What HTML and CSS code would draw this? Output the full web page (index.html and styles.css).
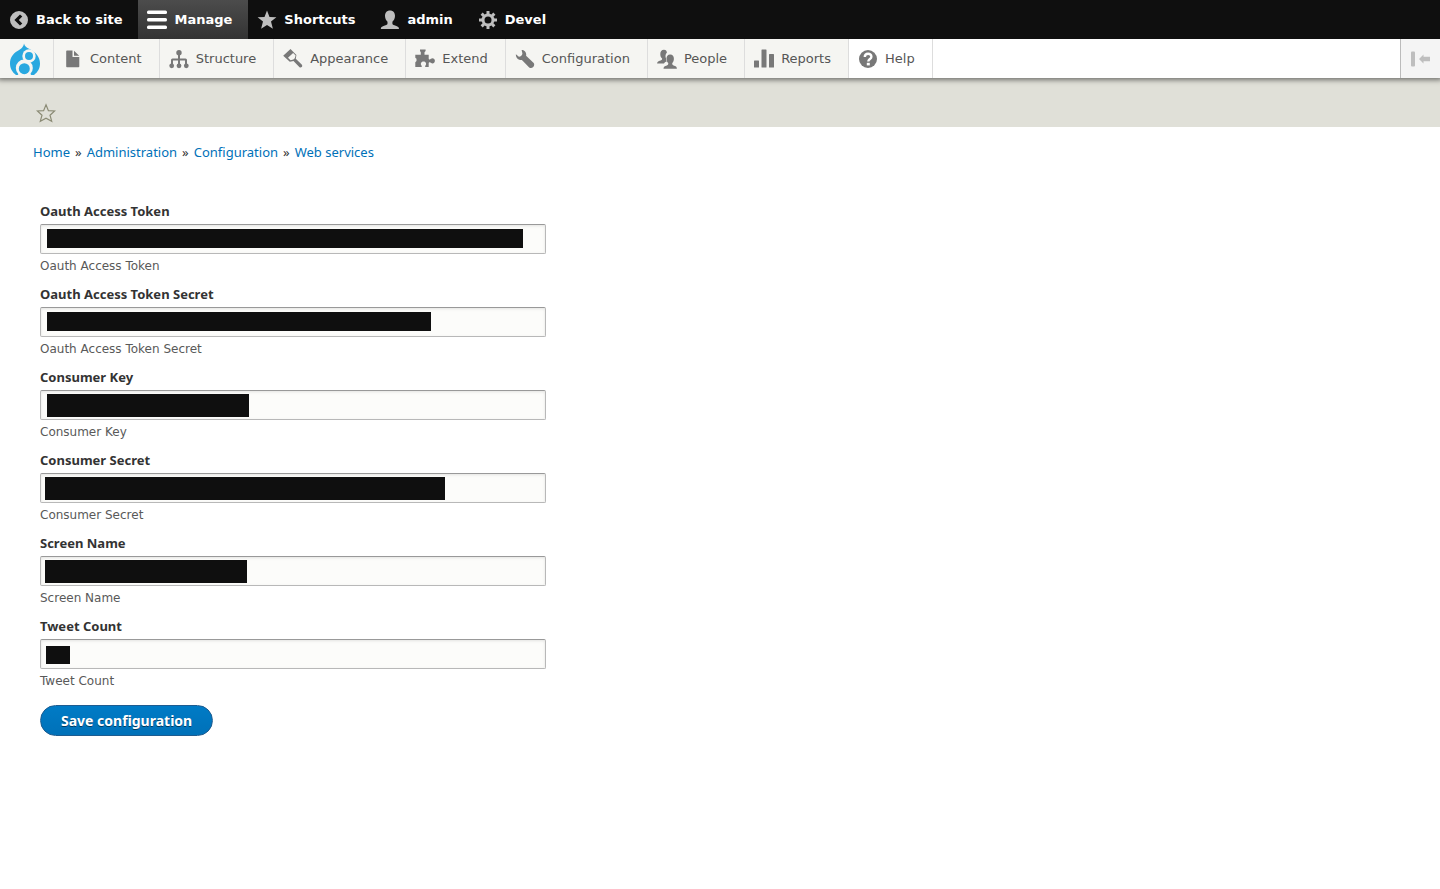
FILE: index.html
```html
<!DOCTYPE html>
<html lang="en">
<head>
    <meta charset="UTF-8">
    <meta name="viewport" content="width=device-width, initial-scale=1.0">
    <title>Web services</title>
    <link rel="stylesheet" href="styles.css">
</head>
<body>
    <header class="toolbar">
        <nav class="toolbar-bar" aria-label="Toolbar items">
            <a class="bar-item" href="#">
                <svg class="icon" viewBox="0 0 20 20" aria-hidden="true"><path fill-rule="evenodd" d="M10 1a9 9 0 1 0 0 18 9 9 0 0 0 0-18zM11 4.400l2.300 2.100L9.800 10l3.500 3.500-2.300 2.100L5.400 10z"/></svg>
                Back to site
            </a>
            <a class="bar-item is-active" href="#">
                <svg class="icon" viewBox="0 0 20 20" aria-hidden="true"><rect y="0.500" width="20" height="3.500" rx="1.500"/><rect y="8" width="20" height="3.500" rx="1.500"/><rect y="15.500" width="20" height="3.500" rx="1.500"/></svg>
                Manage
            </a>
            <a class="bar-item" href="#">
                <svg class="icon" viewBox="0 0 20 20" aria-hidden="true"><path d="M10 .5l2.500 6.500 6.900.3-5.400 4.300 1.900 7.200L10 14.900l-5.900 3.900L6 11.600.6 7.300 7.500 7z"/></svg>
                Shortcuts
            </a>
            <a class="bar-item" href="#">
                <svg class="icon" viewBox="0 0 20 20" aria-hidden="true"><path d="M10 .5c3.200 0 5 2.200 5 5.300 0 2.500-1 4.600-2.600 6v1.700c0 1 .7 1.400 2 1.800 3 .9 4.600 1.600 4.600 3.700H.8c0-2.100 1.700-2.800 4.700-3.700 1.300-.4 2-.8 2-1.800v-1.700C6 10.400 5 8.300 5 5.800 5 2.700 6.800.5 10 .5z"/></svg>
                admin
            </a>
            <a class="bar-item" href="#">
                <svg class="icon" viewBox="0 0 20 20" aria-hidden="true"><g id="teeth"><path d="M8.500 1h3v4h-3zM8.500 15h3v4h-3zM1 8.500h4v3H1zM15 8.500h4v3h-4z"/></g><use href="#teeth" transform="rotate(45 10 10)"/><path fill-rule="evenodd" d="M10 3.500a6.500 6.500 0 1 0 0 13 6.500 6.500 0 0 0 0-13zm0 3a3.500 3.500 0 1 1 0 7 3.500 3.500 0 0 1 0-7z"/></svg>
                Devel
            </a>
        </nav>
        <nav class="toolbar-tray" aria-label="Administration menu">
            <a class="tray-home" href="#" aria-label="Drupal">
                <svg class="logo" viewBox="0 0 32 34" aria-hidden="true">
                    <path class="drop" d="M15 1.500c.6 2.600 2.200 3.800 5 5.200C26.500 10 31 14.500 31 21.500c0 5-2.200 8.500-6 11.500H7C3.200 30 1 26.500 1 21.500 1 16 3.800 11.800 8.500 9c3.500-2 5.800-3.500 6.500-7.500z"/>
                    <circle class="ring" cx="15.300" cy="26" r="8.500"/>
                    <path class="ring" d="M8 34l3-4h9l3 4z"/>
                    <circle class="ring" cx="20" cy="14" r="6.700"/>
                    <circle class="drop" cx="20" cy="14" r="4"/>
                    <circle class="drop" cx="15.300" cy="26.700" r="5.500"/>
                </svg>
            </a>
            <a class="tray-item" href="#">
                <svg class="icon" viewBox="0 0 20 20" aria-hidden="true"><path d="M4 1.500h5.500V8h6.800v9.500a.8.8 0 0 1-.8.8H4a.8.8 0 0 1-.8-.8V2.300a.8.8 0 0 1 .8-.8zM11 1.700l5.200 5H11z"/></svg>
                Content
            </a>
            <a class="tray-item" href="#">
                <svg class="icon" viewBox="0 0 20 20" aria-hidden="true"><path d="M9 4h2v5.500h5.500q1.500 0 1.500 1.500v5h-2v-4.500h-5V16H9v-4.500H4V16H2v-5q0-1.500 1.500-1.500H9z"/><circle cx="10" cy="3.700" r="2.700"/><circle cx="2.700" cy="16.800" r="2.400"/><circle cx="10" cy="16.800" r="2.400"/><circle cx="17.300" cy="16.800" r="2.400"/></svg>
                Structure
            </a>
            <a class="tray-item" href="#">
                <svg class="icon" viewBox="0 0 20 20" aria-hidden="true"><path fill-rule="evenodd" d="M7.500 0l5.900 6-.6 3.700 5.900 5.900c1.600 1.700-.7 4-2.400 2.400l-5.800-6-3.700.7L.2 6.700zM5 8.800l2.600 2.500 2.800-.7 1.400-1.300.8-2.800-2.500-2.600z"/></svg>
                Appearance
            </a>
            <a class="tray-item" href="#">
                <svg class="icon" viewBox="0 0 20 20" aria-hidden="true"><path d="M5 .6h5.600v1.500L9.500 3.200v2.500h4.200v3.500c0 1.500 1.300 1.500 2.200.6 1.600-1.400 4-.4 4 2s-2.400 3.500-4 2c-.9-.9-2.200-.9-2.200.7V18h-3.500v-1.200c1.700-1.600.9-4.400-1.700-4.400s-3.400 2.800-1.800 4.400V18H.3v-4.800l1.200-1.300V9.700L.3 8.800V5.700h5.500V3.200L5 2.100z"/></svg>
                Extend
            </a>
            <a class="tray-item" href="#">
                <svg class="icon" viewBox="0 0 20 20" aria-hidden="true"><path d="M6.600.9c3 0 5.200 2.700 4.500 5.800l7.600 7.400c1.800 2.700-1.600 6.300-4.500 4.400L6.900 10.900C3.500 11.400.6 8.700.9 5.200l3 2.500c1.800 0 3.400-1.500 3.500-3.300z"/></svg>
                Configuration
            </a>
            <a class="tray-item" href="#">
                <svg class="icon" viewBox="0 0 20 20" aria-hidden="true"><path d="M7 .7c1.900 0 2.800 1.200 2.900 3-1.500 1.200-1.800 3.700-.8 6.100.5 1.300 1.200 1.700 1.100 2.500-1.500.5-2.600 1-3.200 2.300H.1c0-1.700 1-2.400 3.500-3.200 1.400-.4 1.600-1 1.500-1.900C3.600 8.300 3.300 6.600 3.300 5 3.300 2.400 4.500.7 7 .7z"/><path class="person-front" d="M13.200 5.500c2.500 0 3.700 1.700 3.700 4.200 0 1.800-.6 3.200-1.600 4.400-.2 1.200.1 1.900 1.300 2.300 2.100.6 3.300 1.200 3.300 3.400H6.500c0-2.200 1.200-2.800 3.400-3.400 1.200-.4 1.500-1.100 1.300-2.300-1.100-1.200-1.700-2.600-1.700-4.400 0-2.500 1.200-4.200 3.700-4.200z"/></svg>
                People
            </a>
            <a class="tray-item" href="#">
                <svg class="icon" viewBox="0 0 20 20" aria-hidden="true"><rect x="0" y="11.500" width="5" height="7" rx="0.500"/><rect x="7.500" y="0.500" width="5" height="18" rx="0.500"/><rect x="15" y="5" width="5" height="13.500" rx="0.500"/></svg>
                Reports
            </a>
            <a class="tray-item is-current" href="#">
                <svg class="icon" viewBox="0 0 20 20" aria-hidden="true"><circle cx="10" cy="10" r="9"/><path class="mark" d="M6.800 8c0-4.200 6.600-4.200 6.600-.3 0 2.300-3.100 2.400-3.100 4.900"/><rect class="mark-dot" x="8.800" y="13.800" width="3" height="2.600"/></svg>
                Help
            </a>
            <button class="tray-toggle" type="button" aria-label="Vertical orientation">
                <svg class="icon" viewBox="0 0 20 20" aria-hidden="true"><rect x="1" y="2.500" width="4" height="15" rx="1"/><path d="M9 10l4.500-4.500v2.300H20v4.400h-6.500v2.300z"/></svg>
            </button>
        </nav>
    </header>

    <div class="page-header">
        <a class="shortcut-star" href="#" aria-label="Add to shortcuts">
            <svg class="icon" viewBox="0 0 20 20" aria-hidden="true"><path d="M10 1.800l2.400 5.900 6.200.3-4.600 4.200 1.700 6-5.700-3.100-5.700 3.100 1.700-6L1.400 8l6.200-.3z"/></svg>
        </a>
    </div>

    <main class="page-content">
        <nav class="breadcrumb" aria-label="Breadcrumb">
            <a href="#">Home</a>
            <span>»</span>
            <a href="#">Administration</a>
            <span>»</span>
            <a href="#">Configuration</a>
            <span>»</span>
            <a href="#">Web services</a>
        </nav>

        <form class="settings-form">
            <div class="form-item">
                <label for="access-token">Oauth Access Token</label>
                <div class="field">
                    <input type="text" id="access-token" aria-describedby="access-token-help">
                    <span class="redacted" style="width: 476px"></span>
                </div>
                <div class="description" id="access-token-help">Oauth Access Token</div>
            </div>
            <div class="form-item">
                <label for="access-secret">Oauth Access Token Secret</label>
                <div class="field">
                    <input type="text" id="access-secret" aria-describedby="access-secret-help">
                    <span class="redacted" style="width: 384px"></span>
                </div>
                <div class="description" id="access-secret-help">Oauth Access Token Secret</div>
            </div>
            <div class="form-item">
                <label for="consumer-key">Consumer Key</label>
                <div class="field">
                    <input type="text" id="consumer-key" aria-describedby="consumer-key-help">
                    <span class="redacted tall" style="width: 202px"></span>
                </div>
                <div class="description" id="consumer-key-help">Consumer Key</div>
            </div>
            <div class="form-item">
                <label for="consumer-secret">Consumer Secret</label>
                <div class="field">
                    <input type="text" id="consumer-secret" aria-describedby="consumer-secret-help">
                    <span class="redacted tall inset" style="width: 400px"></span>
                </div>
                <div class="description" id="consumer-secret-help">Consumer Secret</div>
            </div>
            <div class="form-item">
                <label for="screen-name">Screen Name</label>
                <div class="field">
                    <input type="text" id="screen-name" aria-describedby="screen-name-help">
                    <span class="redacted tall inset" style="width: 202px"></span>
                </div>
                <div class="description" id="screen-name-help">Screen Name</div>
            </div>
            <div class="form-item">
                <label for="tweet-count">Tweet Count</label>
                <div class="field">
                    <input type="text" id="tweet-count" aria-describedby="tweet-count-help">
                    <span class="redacted short" style="width: 24px"></span>
                </div>
                <div class="description" id="tweet-count-help">Tweet Count</div>
            </div>
            <div class="form-actions">
                <button class="save-button" type="submit">Save configuration</button>
            </div>
        </form>
    </main>
</body>
</html>
```
FILE: styles.css
```css
body {
    margin: 0;
    background: #fff;
    color: #333;
    font-family: "Noto Sans", "Open Sans", sans-serif;
    font-size: 13px;
}
a {
    color: #0071b8;
    text-decoration: none;
}
.icon {
    width: 20px;
    height: 20px;
    flex: none;
}
.toolbar {
    position: relative;
    font-family: "DejaVu Sans", Verdana, sans-serif;
    font-size: 13px;
    line-height: 39px;
    box-shadow: 0 0 5px 2px rgba(0, 0, 0, 0.5);
}
.toolbar-bar {
    display: flex;
    background: #0f0f0f;
}
.bar-item {
    display: flex;
    align-items: center;
    gap: 7px;
    padding: 0 16px 0 9px;
    color: #fff;
    fill: #bebebe;
    font-weight: bold;
}
.bar-item.is-active {
    fill: #fff;
    background: linear-gradient(#4c4c4c, #333);
}
.toolbar-tray {
    display: flex;
    height: 39px;
    background: #fff;
}
.tray-home,
.tray-item {
    display: flex;
    align-items: center;
    border-right: 1px solid #ddd;
    background: #f5f5f2;
    color: #565656;
}
.tray-home {
    padding: 0 12px 0 9px;
}
.logo {
    width: 32px;
    height: 34px;
}
.drop {
    fill: #29a8e0;
}
.ring {
    fill: #f5f5f2;
}
.tray-item {
    gap: 7px;
    padding: 0 17px 0 9px;
    fill: #787878;
}
.tray-item.is-current {
    background: #fff;
}
.person-front {
    stroke: #f5f5f2;
    stroke-width: 1;
    paint-order: stroke;
}
.mark {
    fill: none;
    stroke: #fff;
    stroke-width: 2.4;
}
.mark-dot {
    fill: #fff;
}
.tray-toggle {
    display: flex;
    align-items: center;
    margin-left: auto;
    padding: 0 10px 0 9px;
    border: 0;
    border-left: 1px solid #bbb;
    background: #f4f4f4;
    fill: #bebebe;
    cursor: pointer;
}
.page-header {
    padding: 25px 36px 4px;
    background: #e0e0d8;
}
.shortcut-star {
    display: block;
    width: 20px;
    height: 20px;
    fill: none;
    stroke: #8b8b75;
    stroke-width: 1.2;
}
.page-content {
    padding: 15px 33px;
}
.breadcrumb {
    display: flex;
    flex-wrap: wrap;
    gap: 5px;
    line-height: 20px;
}
.settings-form {
    max-width: 506px;
    margin: 41px 7px;
}
.form-item {
    margin-bottom: 12px;
}
.form-item label {
    display: block;
    padding-bottom: 5px;
    font-weight: bold;
    line-height: 16px;
}
.field {
    position: relative;
}
.field input {
    display: block;
    box-sizing: border-box;
    width: 100%;
    height: 30px;
    padding: 4px 8px;
    border: 1px solid #b8b8b8;
    border-top-color: #999;
    border-radius: 2px;
    background: #fcfcfa;
    box-shadow: inset 0 1px 3px rgba(0, 0, 0, 0.1);
    font: inherit;
}
/* solid bar over the stored value */
.redacted {
    position: absolute;
    top: 5px;
    left: 7px;
    height: 19px;
    background: #0f0f0f;
}
.redacted.tall {
    top: 4px;
    height: 23px;
}
.redacted.inset {
    left: 5px;
}
.redacted.short {
    top: 7px;
    left: 6px;
    height: 18px;
}
.description {
    padding-top: 4px;
    color: #595959;
    font-family: "DejaVu Sans", sans-serif;
    font-size: 12px;
    line-height: 16px;
}
.form-actions {
    padding-top: 4px;
}
.save-button {
    padding: 4px 20px;
    border: 1px solid #1e5c90;
    border-radius: 20px;
    background: linear-gradient(#007bc6, #0071b8);
    color: #fff;
    font-family: inherit;
    font-size: 14px;
    font-weight: bold;
    line-height: 21px;
    text-shadow: 0 1px rgba(0, 0, 0, 0.5);
    cursor: pointer;
}
```
